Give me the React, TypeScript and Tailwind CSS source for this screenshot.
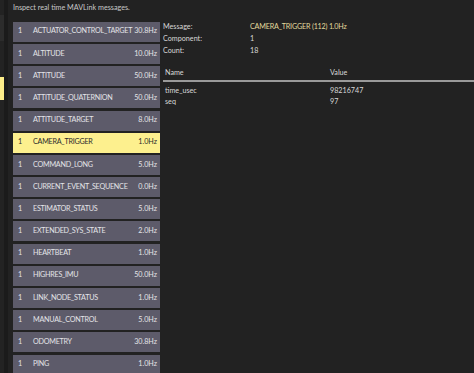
const rows: [string, string][] = [
  ["ACTUATOR_CONTROL_TARGET", "30.8Hz"],
  ["ALTITUDE", "10.0Hz"],
  ["ATTITUDE", "50.0Hz"],
  ["ATTITUDE_QUATERNION", "50.0Hz"],
  ["ATTITUDE_TARGET", "8.0Hz"],
  ["CAMERA_TRIGGER", "1.0Hz"],
  ["COMMAND_LONG", "5.0Hz"],
  ["CURRENT_EVENT_SEQUENCE", "0.0Hz"],
  ["ESTIMATOR_STATUS", "5.0Hz"],
  ["EXTENDED_SYS_STATE", "2.0Hz"],
  ["HEARTBEAT", "1.0Hz"],
  ["HIGHRES_IMU", "50.0Hz"],
  ["LINK_NODE_STATUS", "1.0Hz"],
  ["MANUAL_CONTROL", "5.0Hz"],
  ["ODOMETRY", "30.8Hz"],
  ["PING", "1.0Hz"],
];

const selected = "CAMERA_TRIGGER";

function Sidebar() {
  return (
    <div className="flex w-[8px] shrink-0">
      <div className="flex w-[4px] flex-col bg-[#232323]">
        <div className="h-[15px]" />
        <div className="h-[26px] bg-[#2c2c2c]" />
        <div className="h-[36px]" />
        <div className="h-[23px] bg-[#fdee8a]" />
        <div className="flex-1" />
      </div>
      <div className="w-[4px] bg-[#1b1b1b]" />
    </div>
  );
}

function MessageRow({ name, rate }: { name: string; rate: string }) {
  const active = name === selected;
  return (
    <div
      className={
        active
          ? "flex h-[20px] shrink-0 items-center bg-[#fdf08e] pr-[3px] text-[#2b2b2b]"
          : "flex h-[20px] shrink-0 items-center bg-[#5d5b6a] pr-[3px] text-[#e4e4e8]"
      }
    >
      <span className="w-[20px] shrink-0 pl-[5px]">1</span>
      <span className="flex-1 tracking-[-0.25px]">{name}</span>
      <span className="shrink-0">{rate}</span>
    </div>
  );
}

export default function App() {
  return (
    <div className="flex h-[373px] w-[474px] overflow-hidden bg-[#222222] font-['Lato',sans-serif] text-[7.2px] text-[#d8d8d8]">
      <Sidebar />
      <div className="flex flex-1 flex-col pl-[5px]">
        <p className="pt-[3px] text-[#c8c8c8]">Inspect real time MAVLink messages.</p>
        <div className="mt-[6px] flex items-start gap-[3px]">
          <div className="mt-[2px] flex w-[147px] shrink-0 flex-col gap-[2.2px]">
            {rows.map(([n, r]) => (
              <MessageRow key={n} name={n} rate={r} />
            ))}
          </div>
          <div className="flex flex-1 flex-col">
            <div className="grid grid-cols-[87px_1fr] gap-y-[1px] pt-[1px] leading-[11px]">
              <span>Message:</span>
              <span className="tracking-[-0.2px] text-[#e3da9c]">CAMERA_TRIGGER (112) 1.0Hz</span>
              <span>Component:</span>
              <span>1</span>
              <span>Count:</span>
              <span>18</span>
            </div>
            <div className="mt-[11px] grid grid-cols-[167px_1fr] border-b-2 border-[#9a9a9a] pb-[2px] leading-[11px]">
              <span className="pl-[2px]">Name</span>
              <span>Value</span>
            </div>
            <div className="grid grid-cols-[167px_1fr] pt-[3px] leading-[11px]">
              <span className="pl-[2px]">time_usec</span>
              <span>98216747</span>
              <span className="pl-[2px]">seq</span>
              <span>97</span>
            </div>
          </div>
        </div>
      </div>
    </div>
  );
}
